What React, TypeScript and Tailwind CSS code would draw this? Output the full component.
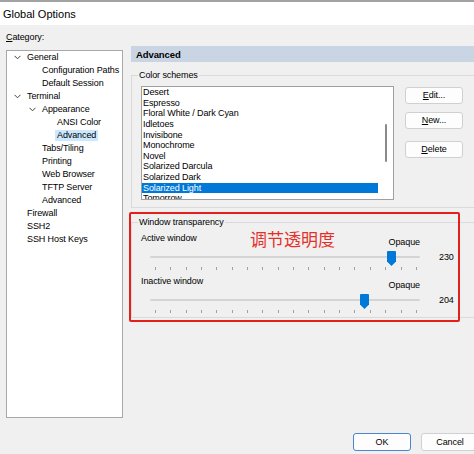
import React from "react";

const tree: { t: string; pad: string; chev?: boolean; sel?: boolean }[] = [
  { t: "General", pad: "pl-[7px]", chev: true },
  { t: "Configuration Paths", pad: "pl-[35px]" },
  { t: "Default Session", pad: "pl-[35px]" },
  { t: "Terminal", pad: "pl-[7px]", chev: true },
  { t: "Appearance", pad: "pl-[22px]", chev: true },
  { t: "ANSI Color", pad: "pl-[50px]" },
  { t: "Advanced", pad: "pl-[50px]", sel: true },
  { t: "Tabs/Tiling", pad: "pl-[35px]" },
  { t: "Printing", pad: "pl-[35px]" },
  { t: "Web Browser", pad: "pl-[35px]" },
  { t: "TFTP Server", pad: "pl-[35px]" },
  { t: "Advanced", pad: "pl-[35px]" },
  { t: "Firewall", pad: "pl-[20px]" },
  { t: "SSH2", pad: "pl-[20px]" },
  { t: "SSH Host Keys", pad: "pl-[20px]" },
];

const schemes = [
  "Desert",
  "Espresso",
  "Floral White / Dark Cyan",
  "Idletoes",
  "Invisibone",
  "Monochrome",
  "Novel",
  "Solarized Darcula",
  "Solarized Dark",
  "Solarized Light",
  "Tomorrow",
];

function Chevron() {
  return (
    <span className="flex w-[13px] h-[13px] items-center">
      <svg width="7" height="5" viewBox="0 0 7 5">
        <polyline points="0.5,0.8 3.5,3.8 6.5,0.8" fill="none" stroke="#404040" strokeWidth="1" />
      </svg>
    </span>
  );
}

function Slider({ value }: { value: number }) {
  const left = 5 + (value / 255) * 261.7 - 4.5;
  return (
    <div className="relative w-[270px] h-[20px] shrink-0">
      <div className="mt-[6px] h-[2px] bg-[#d4d4d4] rounded-full" />
      <div className="mt-[9px] ml-[5px] w-[262px] h-[3px] flex justify-between">
        {Array.from({ length: 18 }).map((_, i) => (
          <div key={i} className="w-px h-[3px] bg-[#a0a0a0]" />
        ))}
      </div>
      <svg
        className="absolute top-[1px]"
        style={{ left: `${left}px` }}
        width="9"
        height="15"
        viewBox="0 0 9 15"
      >
        <path d="M1,0 H8 Q9,0 9,1 V10.5 L4.5,15 L0,10.5 V1 Q0,0 1,0 Z" fill="#0078d7" />
      </svg>
    </div>
  );
}

function SliderBlock({ label, value }: { label: string; value: number }) {
  return (
    <div className="flex flex-col">
      <div className="ml-[3px] w-[279px] h-[18px] flex justify-between items-start">
        <span className="leading-[13px]">{label}</span>
        <span className="leading-[13px] mt-[4px]">Opaque</span>
      </div>
      <div className="ml-[12px] flex items-start">
        <Slider value={value} />
        <span className="ml-[19px] mt-[1px] leading-[13px]">{value}</span>
      </div>
    </div>
  );
}

function Btn({ u, rest, cls }: { u: string; rest: string; cls: string }) {
  return (
    <div
      className={`w-[58px] h-[17px] bg-[#fdfdfd] border border-[#d0d0d0] rounded-[3px] flex items-center justify-center leading-[13px] ${cls}`}
    >
      <span>
        <u className="underline underline-offset-1">{u}</u>
        {rest}
      </span>
    </div>
  );
}

export default function App() {
  return (
    <div className="relative w-[474px] h-[454px] overflow-hidden bg-[#f0f0f0] text-black text-[9px] tracking-[-0.1px] font-['Liberation_Sans',Arial,sans-serif]">
      {/* title bar */}
      <div className="h-[25px] border-t-2 border-[#a3a3a3] bg-white flex items-center pl-[3px]">
        <span className="text-[11px] tracking-normal leading-[14px]">Global Options</span>
      </div>

      {/* body */}
      <div className="flex h-[408px]">
        {/* left column */}
        <div className="w-[123px] shrink-0 pl-[6px] pt-[6px] flex flex-col">
          <div className="leading-[13px]">
            <u className="underline underline-offset-1">C</u>ategory:
          </div>
          <div className="mt-[6px] h-[368px] bg-white border border-[#a8a8a8] flex flex-col">
            {tree.map((r, i) => (
              <div key={i} className={`h-[13px] flex items-center ${r.pad}`}>
                {r.chev && <Chevron />}
                {r.sel ? (
                  <span className="bg-[#cce8ff] px-[2px] -ml-[2px] leading-[11px]">{r.t}</span>
                ) : (
                  <span className="leading-[13px] whitespace-nowrap">{r.t}</span>
                )}
              </div>
            ))}
          </div>
        </div>

        {/* right column */}
        <div className="ml-[8px] w-[380px] shrink-0 pt-[21px] flex flex-col">
          <div className="h-[16px] bg-[#c9d5e3] flex items-center pl-[5px]">
            <span className="font-bold text-[9.5px] leading-[13px]">Advanced</span>
          </div>

          {/* Color schemes group */}
          <fieldset className="mt-[6.5px] border border-[#dadada] pl-[6px] pb-[7px]">
            <legend className="px-[1px] leading-[13px]">Color schemes</legend>
            <div className="flex items-start mt-[4.5px]">
              <div className="ml-[3px] w-[253px] h-[114px] bg-white border border-[#a0a0a0] flex overflow-hidden">
                <div className="w-[236px] flex flex-col">
                  {schemes.map((s) => (
                    <div
                      key={s}
                      className={`h-[10.63px] shrink-0 leading-[10.63px] pl-[1px] whitespace-nowrap ${
                        s === "Solarized Light" ? "bg-[#0078d7] text-white" : ""
                      }`}
                    >
                      {s}
                    </div>
                  ))}
                </div>
                <div className="flex-1 pt-[37px] pl-[7px]">
                  <div className="w-[2px] h-[38px] bg-[#8a8a8a] rounded-full" />
                </div>
              </div>
              <div className="ml-[11px] mt-[1px] flex flex-col">
                <Btn u="E" rest="dit..." cls="" />
                <Btn u="N" rest="ew..." cls="mt-[8px]" />
                <Btn u="D" rest="elete" cls="mt-[12px]" />
              </div>
            </div>
          </fieldset>

          {/* Window transparency group */}
          <fieldset className="mt-[7.5px] border border-[#dadada] pl-[6px] pb-[4px]">
            <legend className="px-[1px] leading-[13px]">Window transparency</legend>
            <div className="mt-[3.5px] flex flex-col gap-[5px]">
              <SliderBlock label="Active window" value={230} />
              <SliderBlock label="Inactive window" value={204} />
            </div>
          </fieldset>
        </div>
      </div>

      {/* footer */}
      <div className="flex pl-[353px] gap-[10px]">
        <div className="w-[58px] h-[18px] shrink-0 bg-[#fdfdfd] border border-[#4a86d0] rounded-[3px] flex items-center justify-center leading-[13px]">
          OK
        </div>
        <div className="w-[58px] h-[18px] shrink-0 bg-[#fdfdfd] border border-[#d0d0d0] rounded-[3px] flex items-center justify-center leading-[13px]">
          Cancel
        </div>
      </div>

      {/* annotation overlay */}
      <div className="absolute left-[129px] top-[212px] w-[331px] h-[110px] border-2 border-[#e3201c] rounded-[2px] pointer-events-none" />
      <div className="absolute left-[250px] top-[228px] text-[17px] leading-[22px] tracking-normal text-[#e5302a] font-['Noto_Sans_CJK_SC',sans-serif]">
        调节透明度
      </div>
    </div>
  );
}
